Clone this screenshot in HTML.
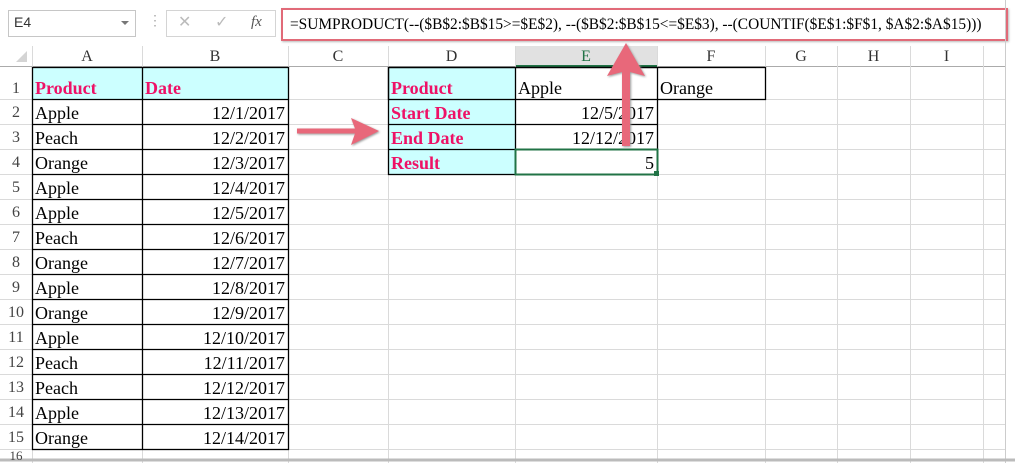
<!DOCTYPE html>
<html><head><meta charset="utf-8"><style>
body{margin:0;width:1015px;height:463px;background:#fff;position:relative;overflow:hidden;font-family:"Liberation Serif",serif;}
.a{position:absolute;box-sizing:border-box;}
.t{position:absolute;font-size:18px;color:#000;white-space:nowrap;line-height:25px;}
.p{color:#ee1166;font-weight:bold;}
.h{position:absolute;font-size:16px;color:#333;text-align:center;line-height:20px;top:47px;}
.r{position:absolute;left:0;width:32px;text-align:center;font-size:16px;color:#444;line-height:25px;}
</style></head><body>
<div class="a" style="left:0;top:0;width:1015px;height:46px;background:#fff;"></div>
<div class="a" style="left:8px;top:10px;width:128px;height:27px;border:1px solid #c6c6c6;"></div>
<div class="t" style="left:14px;top:10px;font-family:'Liberation Sans',sans-serif;font-size:14px;color:#333;">E4</div>
<div class="a" style="left:121px;top:21px;width:0;height:0;border-left:4px solid transparent;border-right:4px solid transparent;border-top:4px solid #777;"></div>
<div class="t" style="left:148px;top:9px;font-size:14px;color:#aaa;">⋮</div>
<div class="a" style="left:166px;top:10px;width:110px;height:27px;border:1px solid #d4d4d4;"></div>
<div class="t" style="left:178px;top:10px;font-size:16px;color:#bbb;font-family:'Liberation Sans',sans-serif;">✕</div>
<div class="t" style="left:215px;top:10px;font-size:16px;color:#bbb;font-family:'Liberation Sans',sans-serif;">✓</div>
<div class="t" style="left:251px;top:10px;font-size:15px;color:#555;font-style:italic;">fx</div>
<div class="a" style="left:281px;top:8px;width:727px;height:33px;border:2px solid #e16a78;box-shadow:1px 1px 2px #bbb;"></div>
<div class="t" style="left:290px;top:12px;font-size:15.4px;">=SUMPRODUCT(--($B$2:$B$15&gt;=$E$2), --($B$2:$B$15&lt;=$E$3), --(COUNTIF($E$1:$F$1, $A$2:$A$15)))</div>
<div class="a" style="left:0;top:46px;width:1005px;height:21px;background:#fff;border-bottom:1px solid #ababab;"></div>
<div class="a" style="left:515px;top:46px;width:142px;height:21px;background:#e1e1e1;border-bottom:2px solid #217346;"></div>
<div class="a" style="left:16px;top:51px;width:0;height:0;border-left:11px solid transparent;border-bottom:11px solid #d4d4d4;"></div>
<div class="h" style="left:32px;width:110px">A</div>
<div class="h" style="left:142px;width:146px">B</div>
<div class="h" style="left:288px;width:100px">C</div>
<div class="h" style="left:388px;width:127px">D</div>
<div class="h" style="left:515px;width:142px;color:#217346">E</div>
<div class="h" style="left:657px;width:108px">F</div>
<div class="h" style="left:765px;width:72px">G</div>
<div class="h" style="left:837px;width:73px">H</div>
<div class="h" style="left:910px;width:73px">I</div>
<svg class="a" style="left:0;top:46px" width="1015" height="417">
<g stroke="#dadada" stroke-width="1">
<line x1="32.5" y1="0" x2="32.5" y2="417"/><line x1="142.5" y1="0" x2="142.5" y2="417"/><line x1="288.5" y1="0" x2="288.5" y2="417"/><line x1="388.5" y1="0" x2="388.5" y2="417"/><line x1="515.5" y1="0" x2="515.5" y2="417"/><line x1="657.5" y1="0" x2="657.5" y2="417"/><line x1="765.5" y1="0" x2="765.5" y2="417"/><line x1="837.5" y1="0" x2="837.5" y2="417"/><line x1="910.5" y1="0" x2="910.5" y2="417"/><line x1="983.5" y1="0" x2="983.5" y2="417"/>
<line x1="0" y1="53.5" x2="1005" y2="53.5"/><line x1="0" y1="78.5" x2="1005" y2="78.5"/><line x1="0" y1="103.5" x2="1005" y2="103.5"/><line x1="0" y1="128.5" x2="1005" y2="128.5"/><line x1="0" y1="153.5" x2="1005" y2="153.5"/><line x1="0" y1="178.5" x2="1005" y2="178.5"/><line x1="0" y1="203.5" x2="1005" y2="203.5"/><line x1="0" y1="228.5" x2="1005" y2="228.5"/><line x1="0" y1="253.5" x2="1005" y2="253.5"/><line x1="0" y1="278.5" x2="1005" y2="278.5"/><line x1="0" y1="303.5" x2="1005" y2="303.5"/><line x1="0" y1="328.5" x2="1005" y2="328.5"/><line x1="0" y1="353.5" x2="1005" y2="353.5"/><line x1="0" y1="378.5" x2="1005" y2="378.5"/><line x1="0" y1="403.5" x2="1005" y2="403.5"/>
</g></svg>
<div class="a" style="left:33px;top:67px;width:255px;height:32px;background:#ccffff;"></div>
<div class="a" style="left:389px;top:67px;width:126px;height:107px;background:#ccffff;"></div>
<svg class="a" style="left:0;top:0" width="1015" height="463">
<g stroke="#000" stroke-width="1.3" fill="none">
<rect x="32.5" y="67.5" width="256" height="382"/>
<line x1="142.5" y1="67" x2="142.5" y2="450"/>
<path d="M32 99.5H289M32 124.5H289M32 149.5H289M32 174.5H289M32 199.5H289M32 224.5H289M32 249.5H289M32 274.5H289M32 299.5H289M32 324.5H289M32 349.5H289M32 374.5H289M32 399.5H289M32 424.5H289"/>
<rect x="388.5" y="67.5" width="377" height="32"/>
<rect x="388.5" y="67.5" width="269" height="107"/>
<line x1="515.5" y1="67" x2="515.5" y2="175"/>
<path d="M388 124.5H658M388 149.5H658"/>
</g>
<rect x="515.5" y="149.5" width="142" height="25" fill="none" stroke="#217346" stroke-width="2"/>
<rect x="654" y="171" width="5" height="5" fill="#217346"/>
<line x1="1005.5" y1="0" x2="1005.5" y2="463" stroke="#ccc"/>
<line x1="0" y1="460" x2="1015" y2="460" stroke="#bbb" stroke-width="3"/>
</svg>
<div class="r" style="top:76px">1</div><div class="r" style="top:100px">2</div><div class="r" style="top:125px">3</div><div class="r" style="top:150px">4</div><div class="r" style="top:175px">5</div><div class="r" style="top:200px">6</div><div class="r" style="top:225px">7</div><div class="r" style="top:250px">8</div><div class="r" style="top:275px">9</div><div class="r" style="top:300px">10</div><div class="r" style="top:325px">11</div><div class="r" style="top:350px">12</div><div class="r" style="top:375px">13</div><div class="r" style="top:400px">14</div><div class="r" style="top:425px">15</div><div class="r" style="top:449px;font-size:13px;line-height:14px">16</div>
<div class="t p" style="left:35px;top:76px">Product</div><div class="t p" style="left:145px;top:76px">Date</div>
<div style="position:absolute;left:35px;top:101px;font-size:18px;line-height:25px">Apple<br>Peach<br>Orange<br>Apple<br>Apple<br>Peach<br>Orange<br>Apple<br>Orange<br>Apple<br>Peach<br>Peach<br>Apple<br>Orange</div>
<div style="position:absolute;left:142px;width:143px;text-align:right;top:101px;font-size:18px;line-height:25px">12/1/2017<br>12/2/2017<br>12/3/2017<br>12/4/2017<br>12/5/2017<br>12/6/2017<br>12/7/2017<br>12/8/2017<br>12/9/2017<br>12/10/2017<br>12/11/2017<br>12/12/2017<br>12/13/2017<br>12/14/2017</div>
<div class="t p" style="left:391px;top:76px">Product</div>
<div class="t p" style="left:391px;top:101px">Start Date</div>
<div class="t p" style="left:391px;top:126px">End Date</div>
<div class="t p" style="left:391px;top:151px">Result</div>
<div class="t" style="left:518px;top:76px">Apple</div>
<div class="t" style="left:660px;top:76px">Orange</div>
<div class="t" style="left:515px;width:139px;text-align:right;top:101px">12/5/2017</div>
<div class="t" style="left:515px;width:139px;text-align:right;top:126px">12/12/2017</div>
<div class="t" style="left:515px;width:139px;text-align:right;top:151px">5</div>
<svg class="a" style="left:0;top:0" width="1015" height="463">
<g fill="#e8687a" style="filter:drop-shadow(1px 1px 1px #999)">
<path d="M297 128.5H355L351 118L379 131L351 145L355 133.5H297Z"/>
<path d="M622 146V72L607 76L626 43L645 76L630 72V146Z"/>
</g></svg>
</body></html>
